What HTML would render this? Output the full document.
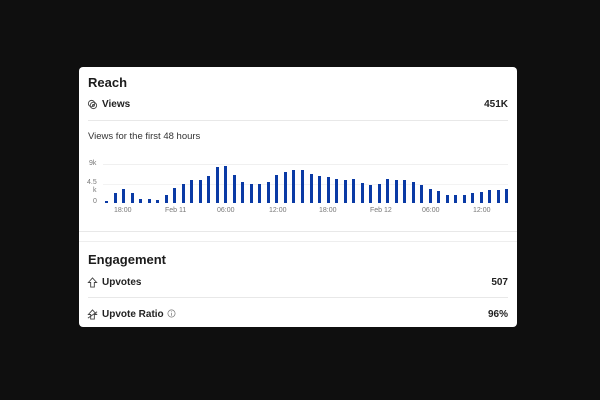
<!DOCTYPE html>
<html><head><style>
body{margin:0;width:600px;height:400px;background:#0f0f0f;font-family:"Liberation Sans",sans-serif;position:relative;overflow:hidden;color:#1c1c1c}
.card{position:absolute;left:79px;top:67px;width:438px;height:260px;background:#fff;border-radius:4px;overflow:hidden}
.t{position:absolute;white-space:nowrap}
.h{font-weight:bold;font-size:13px}
.r{font-size:10px;font-weight:bold;color:#222}
.hr{position:absolute;left:9px;right:9px;height:1px;background:#e8e8e8}
.bar{position:absolute;width:3px;background:#0a3aa5;bottom:0}
.ax{position:absolute;font-size:7px;color:#777}
</style></head><body>
<div class="card">
<div class="t h" style="left:9px;top:8px">Reach</div>
<svg class="t" style="left:8px;top:32px" width="11" height="11" viewBox="0 0 12 12" fill="none" stroke="#444" stroke-width="1"><circle cx="5" cy="5" r="3.5"/><circle cx="7" cy="7" r="3.5"/><circle cx="7" cy="7" r="1"/></svg>
<div class="t r" style="left:23px;top:32px">Views</div>
<div class="t r" style="right:9px;top:32px">451K</div>
<div class="hr" style="top:53px"></div>
<div class="t" style="left:9px;top:64px;font-size:9.5px;color:#333">Views for the first 48 hours</div>
<div class="ax" style="left:10px;top:93px">9k</div>
<div class="ax" style="left:8px;top:112px">4.5</div>
<div class="ax" style="left:14px;top:120px">k</div>
<div class="ax" style="left:14px;top:131px">0</div>
<div style="position:absolute;left:24px;right:9px;top:97px;height:1px;background:#f0f0f0"></div>
<div style="position:absolute;left:24px;right:9px;top:117px;height:1px;background:#f3f3f3"></div>
<div id="ch" style="position:absolute;left:0;top:97px;width:438px;height:39px"></div>
<div class="ax" style="left:35px;top:140px">18:00</div>
<div class="ax" style="left:86px;top:140px">Feb 11</div>
<div class="ax" style="left:138px;top:140px">06:00</div>
<div class="ax" style="left:190px;top:140px">12:00</div>
<div class="ax" style="left:240px;top:140px">18:00</div>
<div class="ax" style="left:291px;top:140px">Feb 12</div>
<div class="ax" style="left:343px;top:140px">06:00</div>
<div class="ax" style="left:394px;top:140px">12:00</div>
<div class="hr" style="top:164px;left:0;right:0"></div>
<div class="hr" style="top:174px;left:0;right:0;background:#eee"></div>
<div class="t h" style="left:9px;top:185px">Engagement</div>
<svg class="t" style="left:8px;top:210px" width="11" height="11" viewBox="0 0 12 12" fill="none" stroke="#444" stroke-width="1"><path d="M6 1L1.5 6H4V11H8V6H10.5Z"/></svg>
<div class="t r" style="left:23px;top:210px">Upvotes</div>
<div class="t r" style="right:9px;top:210px">507</div>
<div class="hr" style="top:230px"></div>
<svg class="t" style="left:8px;top:242px" width="11" height="11" viewBox="0 0 12 12" fill="none" stroke="#444" stroke-width="1"><path d="M6 1L1.5 6H4V11H8V6H10.5Z"/><path d="M1 10L11 3"/></svg>
<div class="t r" style="left:23px;top:242px">Upvote Ratio <svg width="9" height="9" viewBox="0 0 10 10" fill="none" stroke="#777" stroke-width=".8" style="vertical-align:-1px;margin-left:1px"><circle cx="5" cy="5" r="4"/><path d="M5 4.2V7.5M5 2.5V3.2"/></svg></div>
<div class="t r" style="right:9px;top:242px">96%</div>
</div>
<script>
var h=[1.7,9.7,13.7,10.3,4.3,4,3.3,7.7,15.3,19.3,23.3,22.7,26.7,36.3,36.7,28.3,21,19.3,19.3,21,27.7,31.3,33,33.3,29.3,26.7,25.7,24.3,22.7,24,20.3,18.3,18.7,24.3,23.3,23.3,21,18.3,14.3,11.7,8.3,7.7,7.7,9.7,11.3,12.7,13.3,13.7];
var c=document.getElementById('ch'),s='';
for(var i=0;i<48;i++){s+='<div class="bar" style="left:'+(26+i*8.52).toFixed(1)+'px;height:'+h[i]+'px"></div>';}
c.innerHTML=s;
</script>
</body></html>
